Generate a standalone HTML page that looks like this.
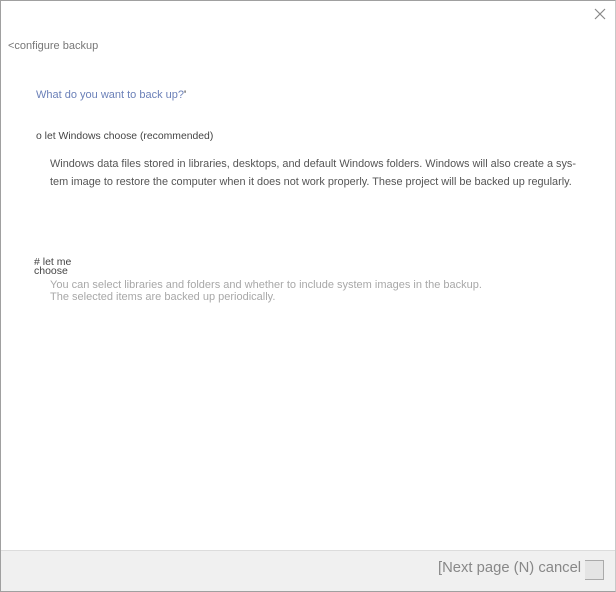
<!DOCTYPE html>
<html><head><meta charset="utf-8"><style>
*{margin:0;padding:0;box-sizing:border-box}
body{width:616px;height:592px;background:#fff;font-family:"Liberation Sans",sans-serif;position:relative;overflow:hidden}
.win{position:absolute;left:0;top:0;width:616px;height:592px;border:1px solid #a0a0a0;border-right-color:#c8c8c8}
.t{position:absolute;white-space:nowrap}
.foot{position:absolute;left:1px;right:1px;top:550px;bottom:1px;background:#f0f0f0;border-top:1px solid #dcdcdc}
</style></head><body>
<div class="win"></div>
<svg class="t" style="left:594px;top:8px" width="12" height="12"><path d="M1 1L11 11M11 1L1 11" stroke="#888" stroke-width="1.2"/></svg>
<div class="t" style="left:8px;top:40px;font-size:11px;color:#777">&lt;configure backup</div>
<div class="t" style="left:36px;top:89px;font-size:11px;color:#6b80b8">What do you want to back up?<span style="color:#222">'</span></div>
<div class="t" style="left:36px;top:131px;font-size:10.4px;color:#444">o let Windows choose (recommended)</div>
<div class="t" style="left:50px;top:155px;font-size:10.9px;color:#555;line-height:18px">Windows data files stored in libraries, desktops, and default Windows folders. Windows will also create a sys-<br>tem image to restore the computer when it does not work properly. These project will be backed up regularly.</div>
<div class="t" style="left:34px;top:258px;font-size:10.5px;color:#444;line-height:9px"># let me<br>choose</div>
<div class="t" style="left:50px;top:279px;font-size:11px;color:#a8a8a8;line-height:12px">You can select libraries and folders and whether to include system images in the backup.<br>The selected items are backed up periodically.</div>
<div class="foot"></div>
<div class="t" style="left:438px;top:560px;font-size:14.8px;color:#888">[Next page (N) cancel</div>
<div class="t" style="left:585px;top:560px;width:19px;height:20px;border:1px solid #aaa;border-left:none;background:#e4e4e4"></div>
</body></html>
